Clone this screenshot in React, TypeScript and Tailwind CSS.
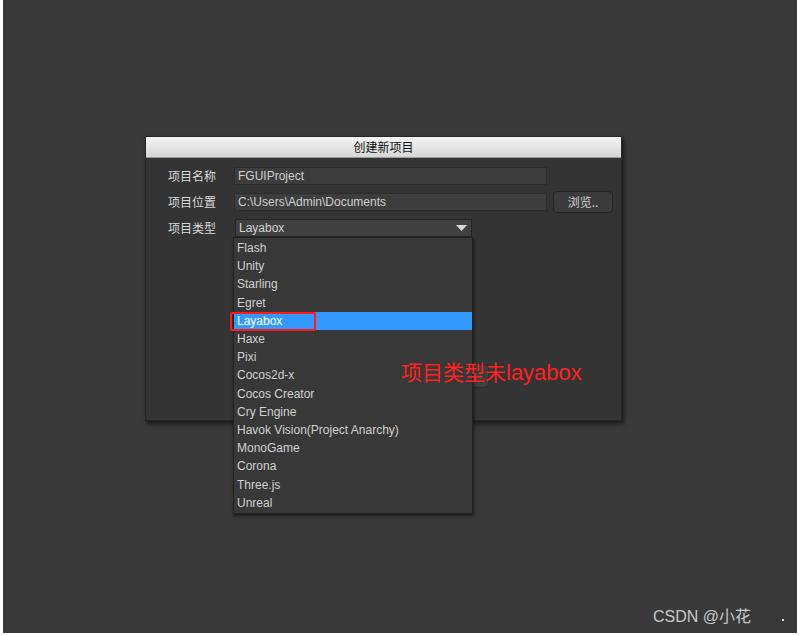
const types = [
  "Flash",
  "Unity",
  "Starling",
  "Egret",
  "Layabox",
  "Haxe",
  "Pixi",
  "Cocos2d-x",
  "Cocos Creator",
  "Cry Engine",
  "Havok Vision(Project Anarchy)",
  "MonoGame",
  "Corona",
  "Three.js",
  "Unreal",
];

const ui = "font-['Liberation_Sans','Noto_Sans_CJK_SC',sans-serif]";

export default function App() {
  return (
    <div className={`w-[800px] h-[635px] bg-white pl-[3px] pr-[3px] pb-[2px] ${ui}`}>
      <div className="relative w-[794px] h-[633px] bg-[#393939] pt-[136px] pl-[142px]">
        {/* dialog */}
        <div className="w-[477px] h-[285px] bg-[#343434] border border-[#262626] shadow-[2px_3px_4px_rgba(0,0,0,0.55)]">
          <div className="h-[21px] bg-gradient-to-b from-[#f4f4f4] to-[#d6d6d6] border-b border-[#9a9a9a] flex items-center justify-center text-[12px] text-[#111] font-['Noto_Sans_CJK_SC',sans-serif]">
            创建新项目
          </div>
          <div className="pt-[9px] pl-[22px] flex flex-col gap-[8px] text-[12px]">
            <div className="flex items-center h-[18px]">
              <span className="w-[66px] text-[#d8d8d8] font-['Noto_Sans_CJK_SC',sans-serif]">项目名称</span>
              <div className="w-[313px] h-[18px] bg-[#3d3d3d] border border-[#2c2c2c] pl-[3px] flex items-center text-[#cfcfcf]">
                FGUIProject
              </div>
            </div>
            <div className="flex items-center h-[18px]">
              <span className="w-[66px] text-[#d8d8d8] font-['Noto_Sans_CJK_SC',sans-serif]">项目位置</span>
              <div className="w-[313px] h-[18px] bg-[#3d3d3d] border border-[#2c2c2c] pl-[3px] flex items-center text-[#cfcfcf]">
                C:\Users\Admin\Documents
              </div>
              <div className="ml-[6px] w-[60px] h-[22px] rounded-[4px] bg-[#3b3b3b] border border-[#262626] flex items-center justify-center text-[#cfcfcf] font-['Noto_Sans_CJK_SC',sans-serif]">
                浏览..
              </div>
            </div>
            <div className="flex items-center h-[18px]">
              <span className="w-[67px] text-[#d8d8d8] font-['Noto_Sans_CJK_SC',sans-serif]">项目类型</span>
              <div className="w-[237px] h-[18px] bg-[#404040] border border-[#262626] pl-[3px] pr-[4px] flex items-center justify-between text-[#d4d4d4]">
                <span>Layabox</span>
                <svg width="11" height="6" viewBox="0 0 11 6">
                  <path d="M0 0H11L5.5 6Z" fill="#d8d8d8" />
                </svg>
              </div>
            </div>
          </div>
        </div>

        {/* ok button peeking from behind the list */}
        <div className="absolute left-[440px] top-[364px] w-[46px] h-[24px] rounded-[4px] bg-[#3e3e3e] border border-[#2a2a2a]" />

        {/* dropdown list */}
        <div className="absolute left-[230px] top-[237px] w-[240px] py-[1px] bg-[#383838] border border-[#222] shadow-[1px_2px_3px_rgba(0,0,0,0.5)] text-[12px] text-[#d0d0d0]">
          {types.map((t) => (
            <div
              key={t}
              className={`h-[18.2px] pl-[3px] flex items-center ${t === "Layabox" ? "bg-[#3399ff] text-white" : ""}`}
            >
              {t}
            </div>
          ))}
        </div>

        {/* annotation box */}
        <div className="absolute left-[227px] top-[312px] w-[86px] h-[19px] border-2 border-[#ff1a1a] rounded-[2px]" />
        <div className="absolute left-[398px] top-[358px] text-[21px] text-[#ff2020] font-['Noto_Sans_CJK_SC',sans-serif] leading-[26px]">
          项目类型未<span className="font-['Liberation_Sans',sans-serif] text-[22px]">layabox</span>
        </div>

        <div className="absolute left-[650px] top-[605px] text-[16px] text-[#c8c8c8]">
          CSDN @小花
        </div>
        <div className="absolute left-[779px] top-[619px] w-[2px] h-[2px] bg-[#ddd]" />
      </div>
    </div>
  );
}
